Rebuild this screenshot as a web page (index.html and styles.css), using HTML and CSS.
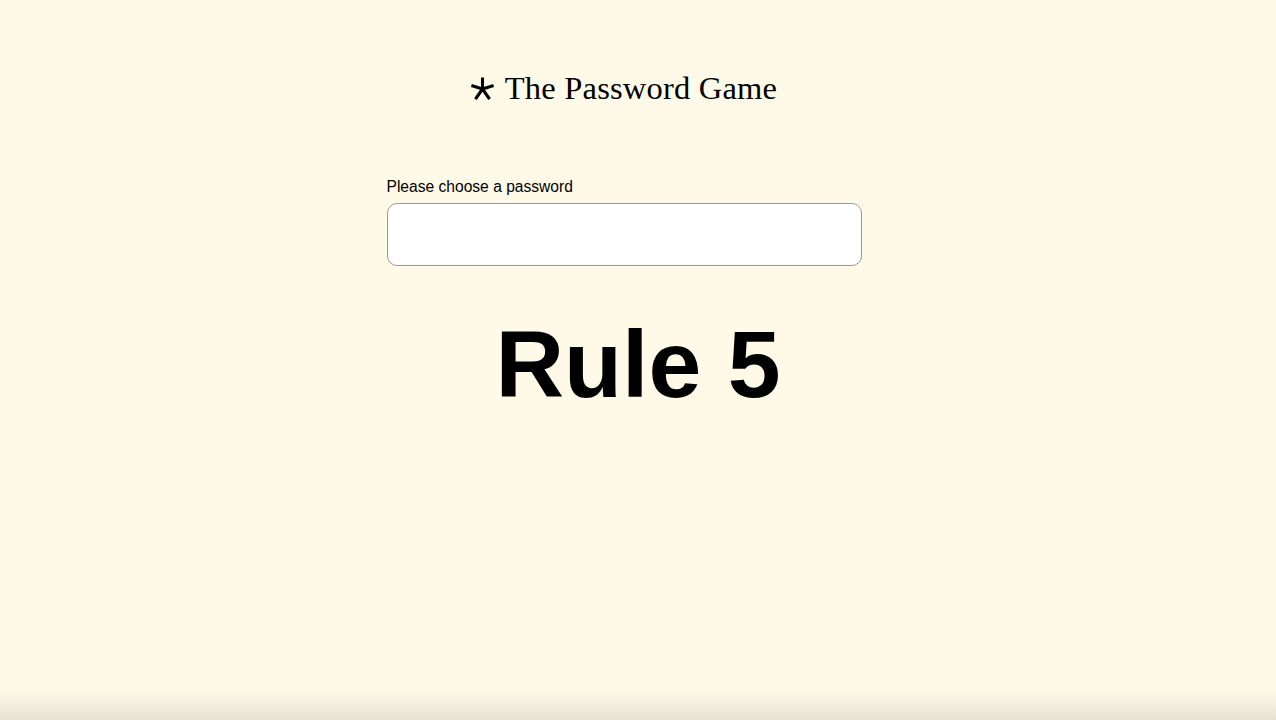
FILE: index.html
```html
<!DOCTYPE html>
<html lang="en">
<head>
  <meta charset="UTF-8">
  <title>The Password Game</title>
  <link rel="stylesheet" href="styles.css">
</head>
<body>
  <div class="page">
    <div class="container">
      <h1 class="title">
        <svg class="star" width="23" height="24" viewBox="0 0 24 24">
          <g stroke="#000" stroke-width="3.2" stroke-linecap="butt">
            <line x1="12" y1="12.5" x2="12" y2="0"/>
            <line x1="12" y1="12" x2="23.6" y2="8.4"/>
            <line x1="12" y1="12" x2="0.4" y2="8.4"/>
            <line x1="12" y1="12" x2="19.4" y2="22.5"/>
            <line x1="12" y1="12" x2="4.6" y2="22.5"/>
          </g>
        </svg>
        <span>The Password Game</span>
      </h1>

      <label class="label" for="password">Please choose a password</label>
      <div class="input-box" id="password" contenteditable="true"></div>
    </div>

    <div class="rule">Rule 5</div>
  </div>
  <div class="fade"></div>
</body>
</html>
```

FILE: styles.css
```css
html, body { margin: 0; height: 100%; }
body { background: #fffae8; font-family: "Liberation Sans", Arial, sans-serif; color: #000; overflow: hidden; }
.page { padding-top: 68px; }
.container { width: 475px; margin: 0 auto; position: relative; left: -14px; }
.title { margin: 0; display: flex; justify-content: center; align-items: center; gap: 11px; font-family: "Liberation Serif", "Times New Roman", serif; font-weight: normal; font-size: 32.5px; line-height: 40px; letter-spacing: 0.2px; }
.star { display: block; margin-top: 2px; }
.label { display: block; margin-top: 70px; font-size: 15.6px; line-height: 18px; }
.input-box { margin-top: 7px; height: 61px; background: #fff; border: 1px solid #999; border-radius: 10px; outline: none; }
.rule { margin-top: 43px; text-align: center; font-weight: bold; font-size: 95px; line-height: 110px; }
.fade { position: fixed; left: 0; right: 0; bottom: 0; height: 30px; background: linear-gradient(to bottom, rgba(232, 226, 208, 0), #e8e2d3); pointer-events: none; }
```
